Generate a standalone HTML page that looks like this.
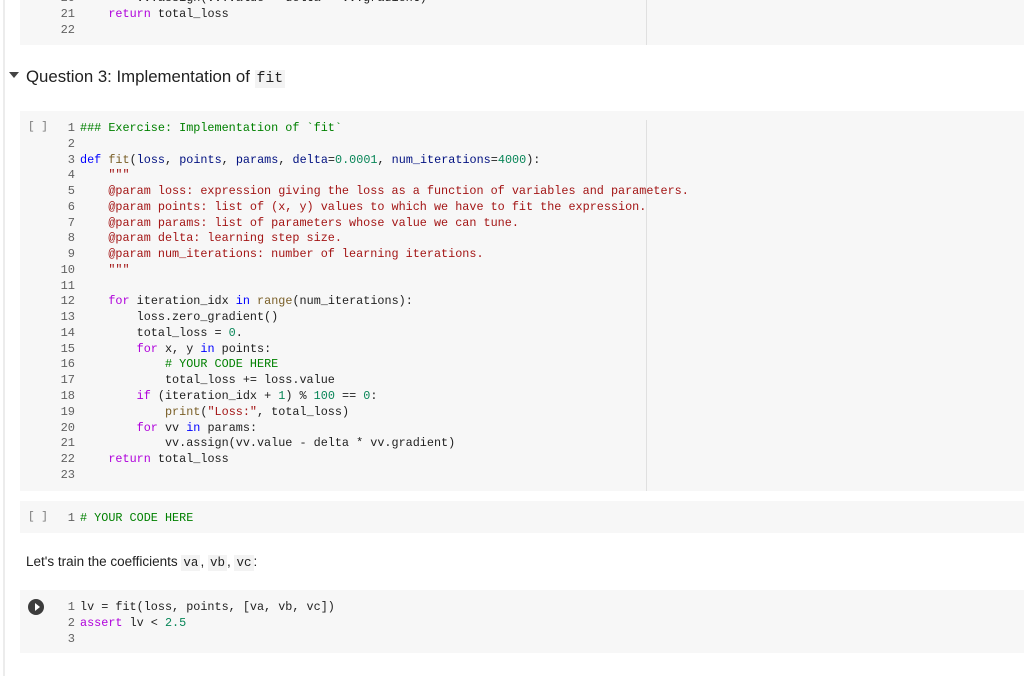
<!DOCTYPE html>
<html><head><style>
body{margin:0;width:1024px;height:676px;background:#fff;position:relative;overflow:hidden;font-family:"Liberation Sans",sans-serif}
.lb{position:absolute;left:3px;top:0;width:2px;height:676px;background:#ececec}
.cell{position:absolute;left:20px;right:0;background:#f7f7f7}
.ruler{position:absolute;left:646px;width:1px;background:#e0e0e0}
.code{position:absolute;left:0;font-family:"Liberation Mono",monospace;font-size:11.8px;line-height:15.77px;white-space:pre;color:#212121}
.ln{display:inline-block;width:55px;text-align:right;color:#616161;padding-right:5px;font-size:12px}
.br{position:absolute;left:28px;font-family:"Liberation Mono",monospace;font-size:11px;color:#757575}
.k{color:#af00db}.d{color:#0000ff}.f{color:#795e26}.p{color:#001080}.n{color:#098658}.c{color:#008000}.s{color:#a31515}
.ic{font-family:"Liberation Mono",monospace;background:#f3f3f3;font-size:12.5px;padding:1px 2px}
</style></head><body>
<div class="lb"></div>
<div class="cell" style="top:0;height:45px"><div class="ruler" style="top:0;height:45px;left:626px"></div>
<div class="code" style="top:-9px;left:0"><span class="ln">20</span>        <span>vv.assign(vv.value - delta * vv.gradient)</span>
<span class="ln">21</span>    <span class="k">return</span> total_loss
<span class="ln">22</span></div></div>

<div style="position:absolute;left:9px;top:72px;width:0;height:0;border-left:5px solid transparent;border-right:5px solid transparent;border-top:6px solid #444"></div>
<div style="position:absolute;left:26px;top:67px;font-size:16.8px;color:#212121">Question 3: Implementation of <span class="ic" style="font-size:14.8px">fit</span></div>

<div class="cell" style="top:111px;height:380px"><div class="ruler" style="top:9px;height:371px;left:626px"></div>
<div class="br" style="top:10px;left:8px">[ ]</div>
<div class="code" style="top:10px"><span class="ln">1</span><span class="c">### Exercise: Implementation of `fit`</span>
<span class="ln">2</span>
<span class="ln">3</span><span class="d">def</span> <span class="f">fit</span>(<span class="p">loss</span>, <span class="p">points</span>, <span class="p">params</span>, <span class="p">delta</span>=<span class="n">0.0001</span>, <span class="p">num_iterations</span>=<span class="n">4000</span>):
<span class="ln">4</span>    <span class="s">"""</span>
<span class="ln">5</span><span class="s">    @param loss: expression giving the loss as a function of variables and parameters.</span>
<span class="ln">6</span><span class="s">    @param points: list of (x, y) values to which we have to fit the expression.</span>
<span class="ln">7</span><span class="s">    @param params: list of parameters whose value we can tune.</span>
<span class="ln">8</span><span class="s">    @param delta: learning step size.</span>
<span class="ln">9</span><span class="s">    @param num_iterations: number of learning iterations.</span>
<span class="ln">10</span><span class="s">    """</span>
<span class="ln">11</span>
<span class="ln">12</span>    <span class="k">for</span> iteration_idx <span class="d">in</span> <span class="f">range</span>(num_iterations):
<span class="ln">13</span>        loss.zero_gradient()
<span class="ln">14</span>        total_loss = <span class="n">0</span>.
<span class="ln">15</span>        <span class="k">for</span> x, y <span class="d">in</span> points:
<span class="ln">16</span>            <span class="c"># YOUR CODE HERE</span>
<span class="ln">17</span>            total_loss += loss.value
<span class="ln">18</span>        <span class="k">if</span> (iteration_idx + <span class="n">1</span>) % <span class="n">100</span> == <span class="n">0</span>:
<span class="ln">19</span>            <span class="f">print</span>(<span class="s">"Loss:"</span>, total_loss)
<span class="ln">20</span>        <span class="k">for</span> vv <span class="d">in</span> params:
<span class="ln">21</span>            vv.assign(vv.value - delta * vv.gradient)
<span class="ln">22</span>    <span class="k">return</span> total_loss
<span class="ln">23</span></div></div>

<div class="cell" style="top:501px;height:32px">
<div class="br" style="top:10px;left:8px">[ ]</div>
<div class="code" style="top:10px"><span class="ln">1</span><span class="c"># YOUR CODE HERE</span></div></div>

<div style="position:absolute;left:26px;top:554px;font-size:13.5px;color:#212121">Let's train the coefficients <span class="ic">va</span>, <span class="ic">vb</span>, <span class="ic">vc</span>:</div>

<div class="cell" style="top:590px;height:63px">
<div style="position:absolute;left:8px;top:9px;width:16px;height:16px;border-radius:50%;background:#3c3c3c"></div>
<div style="position:absolute;left:15px;top:13px;width:0;height:0;border-top:4px solid transparent;border-bottom:4px solid transparent;border-left:5px solid #fff"></div>
<div class="code" style="top:10px"><span class="ln">1</span>lv = fit(loss, points, [va, vb, vc])
<span class="ln">2</span><span class="k">assert</span> lv &lt; <span class="n">2.5</span>
<span class="ln">3</span></div></div>
</body></html>
